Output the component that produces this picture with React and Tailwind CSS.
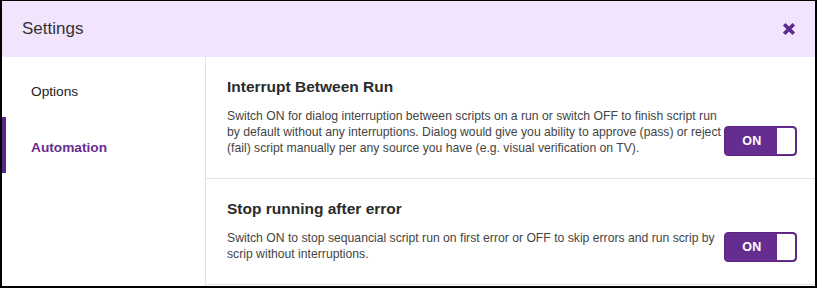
import { useState } from "react";

const sections = [
  {
    id: "interrupt",
    title: "Interrupt Between Run",
    text: "Switch ON for dialog interruption between scripts on a run or switch OFF to finish script run by default without any interruptions. Dialog would give you ability to approve (pass) or reject (fail) script manually per any source you have (e.g. visual verification on TV).",
  },
  {
    id: "stop",
    title: "Stop running after error",
    text: "Switch ON to stop sequancial script run on first error or OFF to skip errors and run scrip by scrip without interruptions.",
  },
];

function Toggle({ on, onClick }) {
  return (
    <button
      onClick={onClick}
      className="shrink-0 w-[73px] h-[30px] rounded-[4px] bg-[#662d91] border border-[#5a2582] flex items-center p-px"
    >
      <span className="flex-1 text-center text-white font-bold text-[12.5px] tracking-[0.5px] pl-px">
        {on ? "ON" : "OFF"}
      </span>
      <span className="w-[18px] h-full bg-white rounded-r-[3px]" />
    </button>
  );
}

export default function App() {
  const [tab, setTab] = useState("automation");
  const [values, setValues] = useState({ interrupt: true, stop: true });

  return (
    <div
      className="w-[817px] h-[288px] bg-white border-t border-l-2 border-r-2 border-b-2 border-black flex flex-col text-[#333]"
      style={{ fontFamily: '"Liberation Sans", Arial, sans-serif' }}
    >
      {/* Header */}
      <div className="h-[56px] shrink-0 bg-[#f2e4fc] flex items-center justify-between pl-[20px] pr-[19px]">
        <div className="text-[17px] text-[#333]">Settings</div>
        <button className="text-[#5c2d91]">
          <svg width="14" height="14" viewBox="0 0 14 14">
            <path
              d="M2.2 2.2 L11.8 11.8 M11.8 2.2 L2.2 11.8"
              stroke="currentColor"
              strokeWidth="3.6"
              strokeLinecap="butt"
            />
          </svg>
        </button>
      </div>

      <div className="flex flex-1 min-h-0">
        {/* Sidebar */}
        <div className="w-[204px] shrink-0 border-r border-[#e2e2e2] pt-[4px]">
          {[
            { id: "options", label: "Options" },
            { id: "automation", label: "Automation" },
          ].map((t) => (
            <div
              key={t.id}
              onClick={() => setTab(t.id)}
              className={`h-[56px] flex items-center pt-[6px] pl-[25px] text-[13.7px] cursor-pointer border-l-4 ${
                tab === t.id
                  ? "border-[#5b2386] text-[#6a2c91] font-bold"
                  : "border-transparent text-[#222]"
              }`}
            >
              {t.label}
            </div>
          ))}
        </div>

        {/* Content */}
        <div className="flex-1">
          {sections.map((s) => (
            <div
              key={s.id}
              className="border-b border-[#e2e2e2] pt-[21px] pb-[22px] pl-[21px] pr-[18px]"
            >
              <div className="text-[15.5px] leading-[18px] font-bold text-[#2b2b2b] mb-[12px]">
                {s.title}
              </div>
              <div className="flex items-end justify-between">
                <p className="w-[496px] text-[12.2px] leading-[16px] text-[#444]">
                  {s.text}
                </p>
                <Toggle
                  on={values[s.id]}
                  onClick={() => setValues({ ...values, [s.id]: !values[s.id] })}
                />
              </div>
            </div>
          ))}
        </div>
      </div>
    </div>
  );
}
